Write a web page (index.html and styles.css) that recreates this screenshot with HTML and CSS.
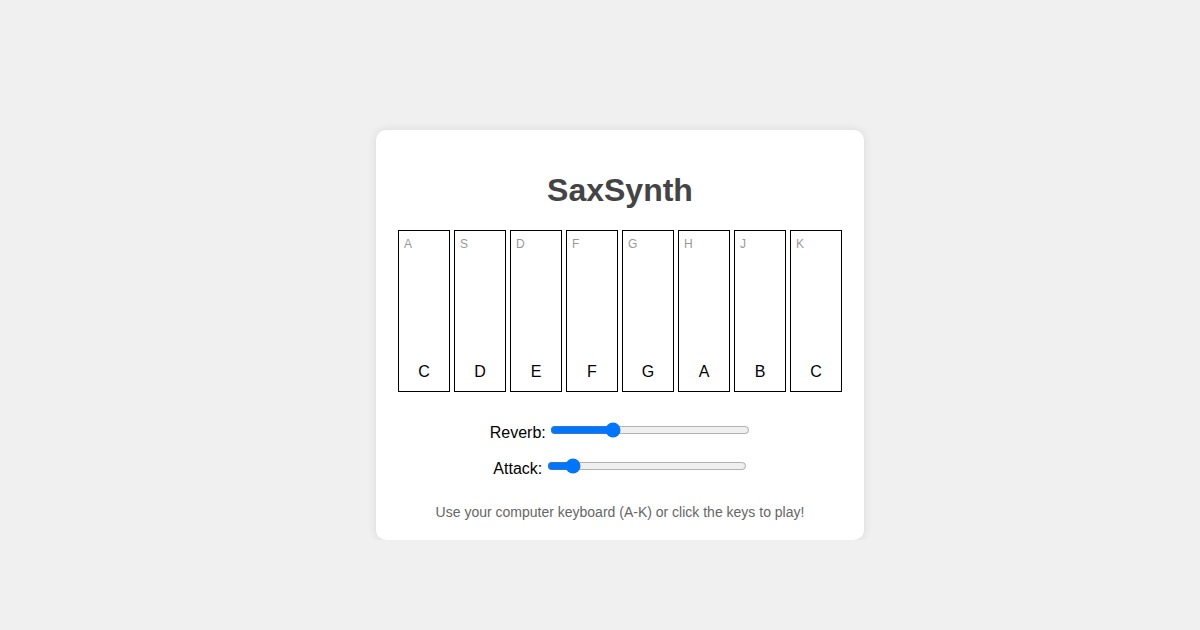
FILE: index.html
```html
<!DOCTYPE html>
<html>
<head>
<meta charset="utf-8">
<link rel="stylesheet" href="styles.css">
</head>
<body>
<div class="card">
  <h1 class="title">SaxSynth</h1>
  <div class="keyboard">
    <div class="key"><span class="hint">A</span><span class="note">C</span></div>
    <div class="key"><span class="hint">S</span><span class="note">D</span></div>
    <div class="key"><span class="hint">D</span><span class="note">E</span></div>
    <div class="key"><span class="hint">F</span><span class="note">F</span></div>
    <div class="key"><span class="hint">G</span><span class="note">G</span></div>
    <div class="key"><span class="hint">H</span><span class="note">A</span></div>
    <div class="key"><span class="hint">J</span><span class="note">B</span></div>
    <div class="key"><span class="hint">K</span><span class="note">C</span></div>
  </div>
  <div class="controls">
    <div class="control"><label for="reverb">Reverb:</label> <input id="reverb" type="range" min="0" max="1" step="0.01" value="0.3"></div>
    <div class="control"><label for="attack">Attack:</label> <input id="attack" type="range" min="0" max="1" step="0.01" value="0.1"></div>
  </div>
  <p class="help">Use your computer keyboard (A-K) or click the keys to play!</p>
</div>
</body>
</html>
```
FILE: styles.css
```css
html, body {
  margin: 0;
  padding: 0;
}
body {
  background: #f0f0f0;
  font-family: "Liberation Sans", Arial, sans-serif;
  display: flex;
  justify-content: center;
  padding-top: 130px;
  padding-left: 40px;
}
.card {
  background: #fff;
  border-radius: 10px;
  box-shadow: 0 0 10px rgba(0, 0, 0, 0.1);
  padding: 20px;
  width: 448px;
  text-align: center;
}
.title {
  font-size: 32px;
  color: #444;
  margin: 22px 0 21px;
}
.keyboard {
  display: flex;
  justify-content: center;
  gap: 4px;
}
.key {
  width: 50px;
  height: 160px;
  border: 1px solid #000;
  background: #fff;
  display: flex;
  flex-direction: column;
  justify-content: space-between;
  box-sizing: content-box;
}
.hint {
  font-size: 12px;
  color: #999;
  text-align: left;
  padding: 6px 0 0 5px;
}
.note {
  font-size: 16px;
  color: #000;
  padding-bottom: 10px;
}
.controls {
  margin-top: 28px;
}
.control {
  font-size: 16px;
  color: #000;
  margin-bottom: 14px;
}
.control label {
  margin-left: 2px;
}
.control input {
  width: 200px;
  margin: 2px 2px 2px 0;
  vertical-align: baseline;
}
.help {
  font-size: 14px;
  color: #666;
  margin: 26px 0 0;
}
```
